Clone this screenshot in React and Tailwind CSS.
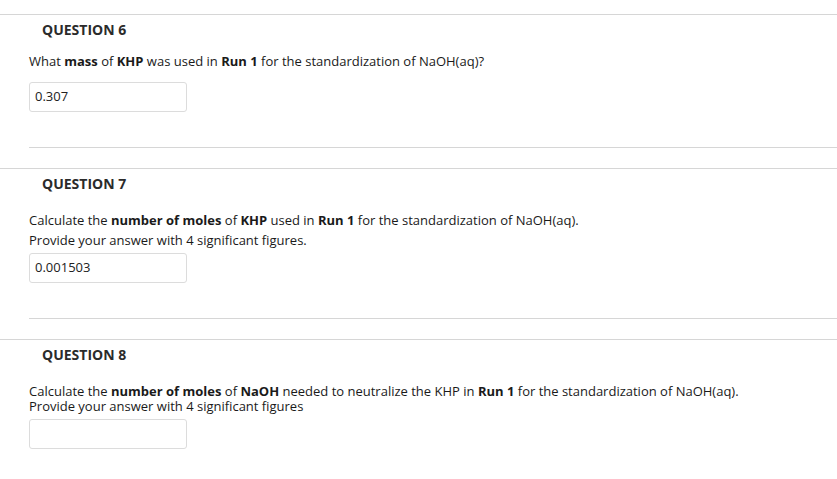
import React from "react";

function Input({ value }) {
  return (
    <div className="w-[158px] h-[30px] border border-[#dcdcdc] rounded-[3px] flex items-center pl-[5px] text-[13px] text-[#222] bg-white">
      {value}
    </div>
  );
}

export default function App() {
  return (
    <div className="w-[837px] h-[479px] bg-white overflow-hidden font-['Open_Sans',sans-serif] text-[#1a1a1a]">
      <div className="h-[14px]" />
      {/* Question 6 */}
      <div className="border-t border-[#d6d6d6]">
        <div className="pt-[5px] pl-[42px] text-[14px] leading-[20px] font-bold text-[#2b2b2b]">QUESTION 6</div>
        <div className="pl-[29px]">
          <p className="mt-[11px] text-[13px] leading-[20px]">
            What <b>mass</b> of <b>KHP</b> was used in <b>Run 1</b> for the standardization of NaOH(aq)?
          </p>
          <div className="mt-[11px]">
            <Input value="0.307" />
          </div>
          <div className="mt-[35px] border-t border-[#d6d6d6]" />
        </div>
        <div className="h-[20px]" />
      </div>
      {/* Question 7 */}
      <div className="border-t border-[#d6d6d6]">
        <div className="pt-[5px] pl-[42px] text-[14px] leading-[20px] font-bold text-[#2b2b2b]">QUESTION 7</div>
        <div className="pl-[29px]">
          <div className="mt-[16px] text-[13px] leading-[20px]">
            <p>
              Calculate the <b>number of moles</b> of <b>KHP</b> used in <b>Run 1</b> for the standardization of NaOH(aq).
            </p>
            <p>Provide your answer with 4 significant figures.</p>
          </div>
          <div className="mt-[3px]">
            <Input value="0.001503" />
          </div>
          <div className="mt-[35px] border-t border-[#d6d6d6]" />
        </div>
        <div className="h-[20px]" />
      </div>
      {/* Question 8 */}
      <div className="border-t border-[#d6d6d6]">
        <div className="pt-[5px] pl-[42px] text-[14px] leading-[20px] font-bold text-[#2b2b2b]">QUESTION 8</div>
        <div className="pl-[29px]">
          <p className="mt-[19px] text-[13px] leading-[15px]">
            Calculate the <b>number of moles</b> of <b>NaOH</b> needed to neutralize the KHP in <b>Run 1</b> for the standardization of NaOH(aq).
            <br />
            Provide your answer with 4 significant figures
          </p>
          <div className="mt-[5px]">
            <Input value="" />
          </div>
        </div>
      </div>
    </div>
  );
}
